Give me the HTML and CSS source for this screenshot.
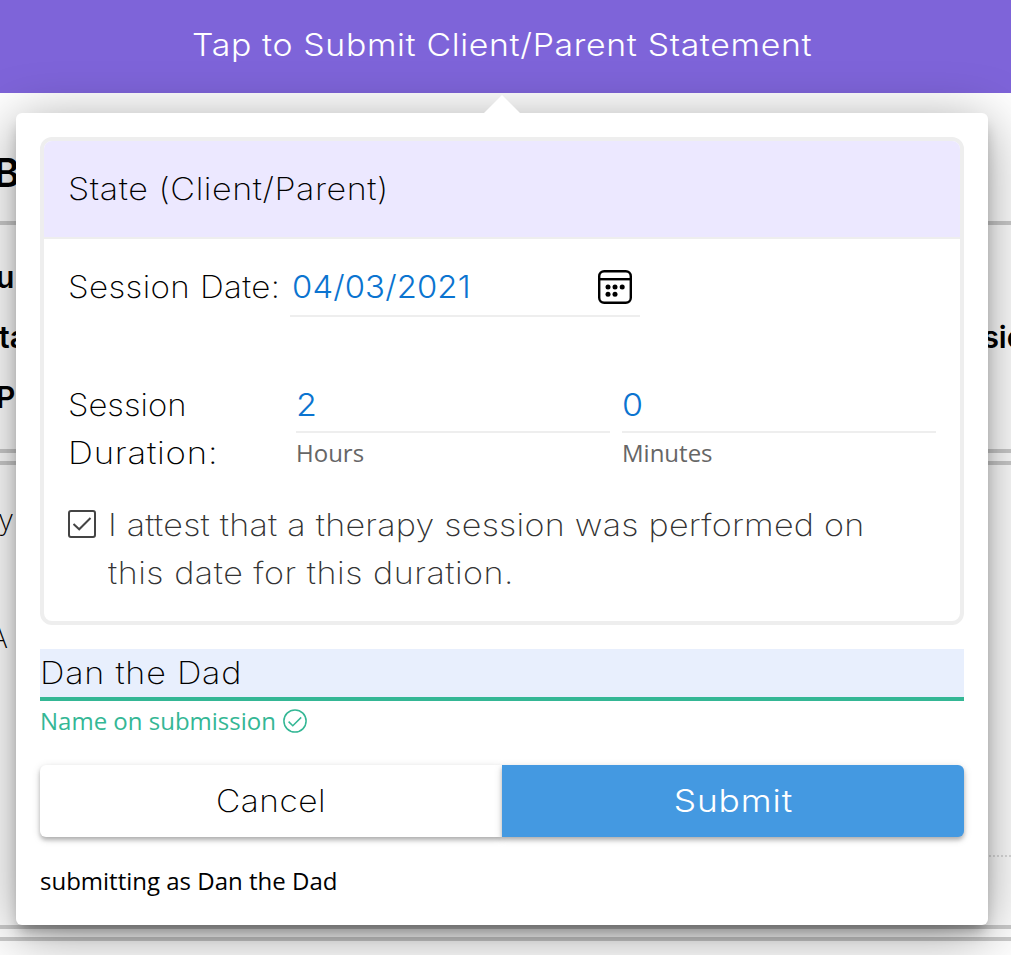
FILE: index.html
```
<!DOCTYPE html>
<html lang="en">
<head>
    <meta charset="UTF-8">
    <meta name="viewport" content="width=device-width, initial-scale=1.0">
    <title>Client/Parent Statement</title>
    <link rel="stylesheet" href="styles.css">
</head>
<body>
    <header class="top-bar"><span class="wide top-title">Tap to Submit Client/Parent Statement</span></header>

    <!-- Page behind the popover -->
    <main class="page">
        <div class="page-title">B</div>
        <div class="panel summary">
            <div class="line">u</div>
            <div class="line"><span>ta</span><span class="right">sio</span></div>
            <div class="line">P</div>
        </div>
        <div class="panel details">
            <div class="detail">y</div>
            <div class="detail">A</div>
            <div class="dots"></div>
        </div>
        <div class="panel next"></div>
    </main>

    <form class="popover">
        <div class="arrow"></div>
        <section class="card">
            <h2 class="card-header"><span class="wide state-title">State (Client/Parent)</span></h2>
            <div class="card-body">
                <div class="row date-row">
                    <label class="date-label"><span class="wide date-text">Session Date:</span></label>
                    <div class="date-field">
                        <span class="wide date-value">04/03/2021</span>
                        <svg class="calendar" viewBox="0 0 36 36" fill="none" stroke="#000" stroke-width="2.4">
                            <rect x="2.2" y="2.2" width="31.6" height="31.6" rx="5"/>
                            <path d="M2 10.2h32"/>
                            <g fill="#000" stroke="none">
                                <circle cx="11" cy="18" r="2.5"/>
                                <circle cx="18" cy="18" r="2.5"/>
                                <circle cx="25.2" cy="18" r="2.5"/>
                                <circle cx="11" cy="25.2" r="2.5"/>
                                <circle cx="18" cy="25.2" r="2.5"/>
                            </g>
                        </svg>
                    </div>
                </div>
                <div class="row duration-row">
                    <label class="duration-label"><span class="wide session-word">Session</span><br><span class="wide duration-word">Duration:</span></label>
                    <div class="number-field">
                        <div class="number-value"><span class="wide number-text">2</span></div>
                        <div class="hint">Hours</div>
                    </div>
                    <div class="number-field">
                        <div class="number-value"><span class="wide number-text">0</span></div>
                        <div class="hint">Minutes</div>
                    </div>
                </div>
                <label class="attest">
                    <svg class="checkbox" viewBox="0 0 28 28" fill="none" stroke="#444" stroke-width="2">
                        <rect x="1" y="1" width="26" height="26" rx="2"/>
                        <path d="M5.5 14l5.7 5.3L22.5 8"/>
                    </svg>
                    <span><span class="wide attest-first">I attest that a therapy session was performed on</span><br><span class="wide attest-second">this date for this duration.</span></span>
                </label>
            </div>
        </section>

        <div class="name-field"><span class="wide name-value">Dan the Dad</span></div>
        <div class="name-hint">
            <span>Name on submission</span>
            <svg class="valid" viewBox="0 0 24 24" fill="none" stroke="#34b795" stroke-width="1.5">
                <circle cx="12" cy="12" r="11.1"/>
                <path d="M5.6 12.6l4.2 4.2L18.2 8.4"/>
            </svg>
        </div>
        <div class="buttons">
            <button type="button" class="cancel"><span class="wide cancel-text">Cancel</span></button>
            <button type="button" class="submit"><span class="wide submit-text">Submit</span></button>
        </div>
        <p class="submitting">submitting as Dan the Dad</p>
    </form>
</body>
</html>
```
FILE: styles.css
```
* {
    box-sizing: border-box;
}
body {
    margin: 0;
    height: 955px;
    overflow: hidden;
    position: relative;
    background: #fff;
    color: #000;
    font-family: Inter, sans-serif;
    font-weight: 200;
    font-size: 31px;
    line-height: 48px;
}
/* Stretched lettering */
.wide {
    display: inline-block;
    transform: scaleX(1.1);
    transform-origin: left;
    white-space: nowrap;
}
.top-bar {
    height: 93px;
    padding: 21px 0 0 192px;
    background: #7e64d9;
    color: #fff;
    font-weight: 300;
}
.top-title {
    letter-spacing: 0.6px;
    transform: scaleX(1.09);
}

/* Background page */
.page-title {
    height: 128px;
    padding-top: 56px;
    margin-left: -6px;
    font-size: 39px;
    font-weight: 600;
}
.panel {
    border-top: 4px solid #ccc;
    border-bottom: 4px solid #ccc;
}
.summary {
    height: 232px;
    padding-top: 22px;
    font-size: 30px;
    font-weight: 600;
}
.line {
    display: flex;
    justify-content: space-between;
    height: 60px;
    line-height: 60px;
    margin-left: -4px;
    margin-right: -14px;
}
.line + .line {
    margin-left: -1px;
}
.line + .line + .line {
    margin-left: -4px;
}
.details {
    height: 468px;
    margin-top: 8px;
    padding-top: 31px;
    font-size: 29px;
}
.detail {
    height: 118px;
    margin-left: -2px;
}
.detail + .detail {
    margin-left: -11px;
}
.dots {
    margin: 123px 0 0 500px;
    border-top: 2px dotted #ddd;
}
.next {
    height: 40px;
    margin-top: 8px;
}

/* Popover */
.popover {
    position: absolute;
    top: 113px;
    left: 16px;
    width: 972px;
    height: 812px;
    padding: 24px;
    border-radius: 6px;
    background: #fff;
    box-shadow: 0 10px 14px -4px rgba(0, 0, 0, 0.3), 0 10px 56px rgba(0, 0, 0, 0.4);
}
.arrow {
    position: absolute;
    top: -18px;
    left: 467px;
    width: 38px;
    height: 19px;
    background: #fff;
    clip-path: polygon(50% 0, 100% 100%, 0 100%);
}
.card {
    height: 488px;
    border: 4px solid #eee;
    border-radius: 12px;
    overflow: hidden;
}
.card-header {
    height: 98px;
    margin: 0;
    padding: 24px;
    background: #ece8ff;
    border-bottom: 2px solid #eee;
    font-size: 31px;
    font-weight: 200;
}
.state-title {
    letter-spacing: 0.5px;
}
.card-body {
    padding: 24px 24px 0;
}
.row {
    display: flex;
}
.date-row {
    height: 118px;
}
.date-label {
    width: 222px;
}
.date-text {
    letter-spacing: 0.35px;
    transform: scaleX(1.07);
}
.date-field {
    display: flex;
    justify-content: space-between;
    width: 350px;
    height: 54px;
    padding: 0 7px 0 2px;
    border-bottom: 2px solid #eee;
    color: #0b74d0;
    font-weight: 300;
}
.date-value {
    letter-spacing: 0.1px;
    transform: scaleX(1.06);
}
.calendar {
    width: 36px;
    height: 36px;
    margin-top: 6px;
}
.duration-row {
    height: 120px;
    gap: 12px;
}
.duration-label {
    width: 216px;
}
.session-word {
    transform: scaleX(1.06);
}
.duration-word {
    letter-spacing: 0.7px;
    transform: scaleX(1.12);
}
.number-field {
    flex: 1;
}
.number-value {
    height: 52px;
    border-bottom: 2px solid #eee;
    color: #0b74d0;
    font-weight: 300;
}
.hint {
    color: #666;
    font-family: "Open Sans", sans-serif;
    font-size: 24px;
    font-weight: 400;
    line-height: 40px;
}
.attest {
    display: flex;
    gap: 12px;
    color: #333;
}
.checkbox {
    width: 28px;
    height: 28px;
    margin-top: 9px;
}
.attest-first {
    letter-spacing: 0.22px;
}
.attest-second {
    letter-spacing: 0.46px;
}
.name-field {
    height: 52px;
    margin-top: 24px;
    background: #e8effd;
    border-bottom: 4px solid #34b795;
}
.name-value {
    letter-spacing: 0.7px;
}
.name-hint {
    display: flex;
    align-items: center;
    gap: 7px;
    height: 40px;
    color: #34b795;
    font-family: "Open Sans", sans-serif;
    font-size: 24px;
    font-weight: 400;
}
.valid {
    width: 24px;
    height: 24px;
}
.buttons {
    display: flex;
    height: 72px;
    margin-top: 24px;
}
.buttons button {
    flex: 1;
    padding: 0;
    border: 0;
    border-radius: 6px 0 0 6px;
    background: #fff;
    color: #000;
    box-shadow: 0 3px 4px rgba(0, 0, 0, 0.25), 0 2px 10px rgba(0, 0, 0, 0.12);
    font: inherit;
}
.buttons .submit {
    border-radius: 0 6px 6px 0;
    background: #4499e1;
    color: #fff;
    font-weight: 300;
}
.cancel-text {
    letter-spacing: 0.5px;
    transform: scaleX(1.08);
    transform-origin: center;
}
.submit-text {
    letter-spacing: 0.8px;
    transform: scaleX(1.14);
    transform-origin: center;
}
.submitting {
    margin: 20px 0 0;
    font-family: "Open Sans", sans-serif;
    font-size: 24px;
    font-weight: 400;
}
```
